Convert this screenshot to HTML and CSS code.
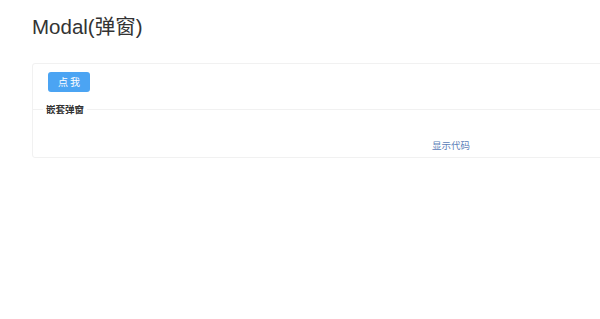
FILE: index.html
```html
<!DOCTYPE html>
<html lang="zh-CN">
<head>
  <meta charset="UTF-8" />
  <meta name="viewport" content="width=device-width, initial-scale=1.0" />
  <title>Modal(弹窗)</title>
  <link rel="stylesheet" href="styles.css">
</head>
<body>
  <div class="page">
    <h1 class="page-title">Modal(弹窗)</h1>

    <div class="demo-card">
      <div class="demo-body">
        <button class="btn-primary">点 我</button>
      </div>
      <div class="demo-divider"><span>嵌套弹窗</span></div>
      <div class="demo-code">
        <a href="#" class="code-toggle">显示代码</a>
      </div>
    </div>
  </div>
</body>
</html>
```

FILE: styles.css
```css
* { box-sizing: border-box; }
body {
  margin: 0;
  background: #fff;
  color: #333;
  font-family: "Liberation Sans", "Noto Sans CJK SC", sans-serif;
}

/* page clips the wide demo box at the window edge */
.page {
  width: 600px;
  padding-left: 32px;
  overflow: hidden;
}

.page-title {
  margin: 0 0 21px;
  padding-top: 12px;
  font-size: 20.5px;
  line-height: 30px;
  font-weight: normal;
  color: #333;
}

.demo-card {
  width: 838px;
  border: 1px solid #f1f1f1;
  border-radius: 3px;
  padding: 8px 15px 0;
}

.btn-primary {
  display: block;
  height: 20px;
  width: 42px;
  padding: 0;
  border: none;
  border-radius: 3px;
  background: #4ba4f3;
  color: #fff;
  font-family: "Noto Sans CJK SC", sans-serif;
  font-size: 10px;
  line-height: 20px;
  cursor: pointer;
}

/* divider with the title on the left */
.demo-divider {
  display: flex;
  align-items: center;
  margin: 10px -15px 0;
  height: 14px;
  font-family: "Noto Sans CJK SC", sans-serif;
  font-size: 9.5px;
  font-weight: bold;
  color: #333;
}
.demo-divider::before,
.demo-divider::after {
  content: "";
  border-top: 1px solid #f1f1f1;
}
.demo-divider::before { width: 10px; }
.demo-divider::after { flex: 1; }
.demo-divider span { padding: 0 3px; }

.demo-code {
  padding: 21px 0 5px;
  text-align: center;
  line-height: 14px;
}
.code-toggle {
  font-family: "Noto Sans CJK SC", sans-serif;
  font-size: 9.5px;
  color: #5a80b8;
  text-decoration: none;
}
```
